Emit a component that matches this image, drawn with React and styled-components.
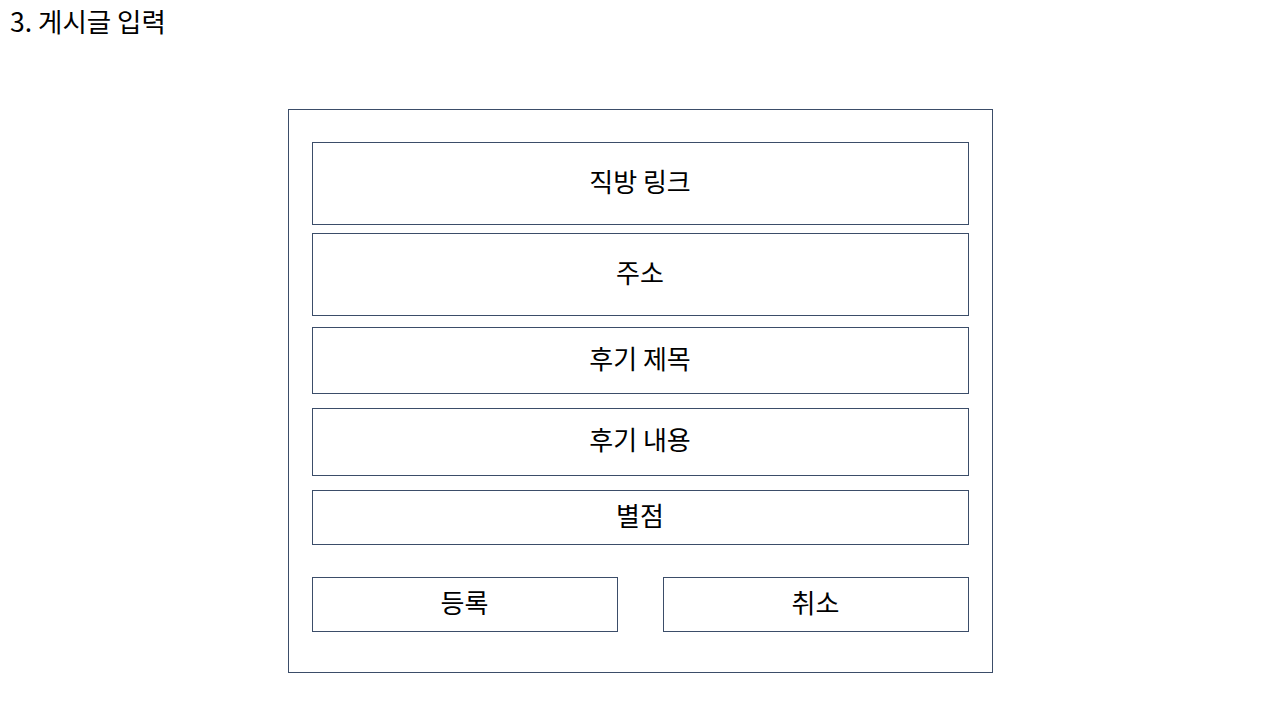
import styled, { createGlobalStyle } from "styled-components";

const GlobalStyle = createGlobalStyle`
    body{
        margin: 0;
        background: #fff;
        font-family: "Noto Sans CJK KR", "Noto Sans", sans-serif;
        color: #000;
    }
`;

const fields = [
    { label: "직방 링크", height: 83, gap: 0 },
    { label: "주소", height: 83, gap: 8 },
    { label: "후기 제목", height: 67, gap: 11 },
    { label: "후기 내용", height: 68, gap: 14 },
    { label: "별점", height: 55, gap: 14 },
];

export default function App(){
    return (
        <>
            <GlobalStyle/>
            <Page>
                <Title>3. 게시글 입력</Title>
                <FormBox>
                    {fields.map((f) => (
                        <Field key={f.label} h={f.height} gap={f.gap}>{f.label}</Field>
                    ))}
                    <Buttons>
                        <Button>등록</Button>
                        <Button>취소</Button>
                    </Buttons>
                </FormBox>
            </Page>
        </>
    );
}

const Page = styled.div`
    width: 1280px;
    height: 720px;
    box-sizing: border-box;
`;

const Title = styled.h1`
    margin: 0;
    padding: 2px 0 0 10px;
    font-size: 26.5px;
    font-weight: 400;
    line-height: 38px;
    height: 109px;
    box-sizing: border-box;
`;

const FormBox = styled.div`
    width: 705px;
    margin: 0 auto;
    padding: 32px 23px 40px 23px;
    border: 1px solid #3b4d69;
    box-sizing: border-box;
    display: flex;
    flex-direction: column;
`;

const Field = styled.div`
    height: ${(p) => p.h}px;
    margin-top: ${(p) => p.gap}px;
    padding-bottom: 6px;
    border: 1px solid #3b4d69;
    box-sizing: border-box;
    display: flex;
    align-items: center;
    justify-content: center;
    font-size: 26px;
    line-height: 1;
`;

const Buttons = styled.div`
    margin-top: 32px;
    display: flex;
    justify-content: space-between;
`;

const Button = styled.div`
    width: 306px;
    height: 55px;
    padding-bottom: 5px;
    border: 1px solid #3b4d69;
    box-sizing: border-box;
    display: flex;
    align-items: center;
    justify-content: center;
    font-size: 26px;
    line-height: 1;
`;
